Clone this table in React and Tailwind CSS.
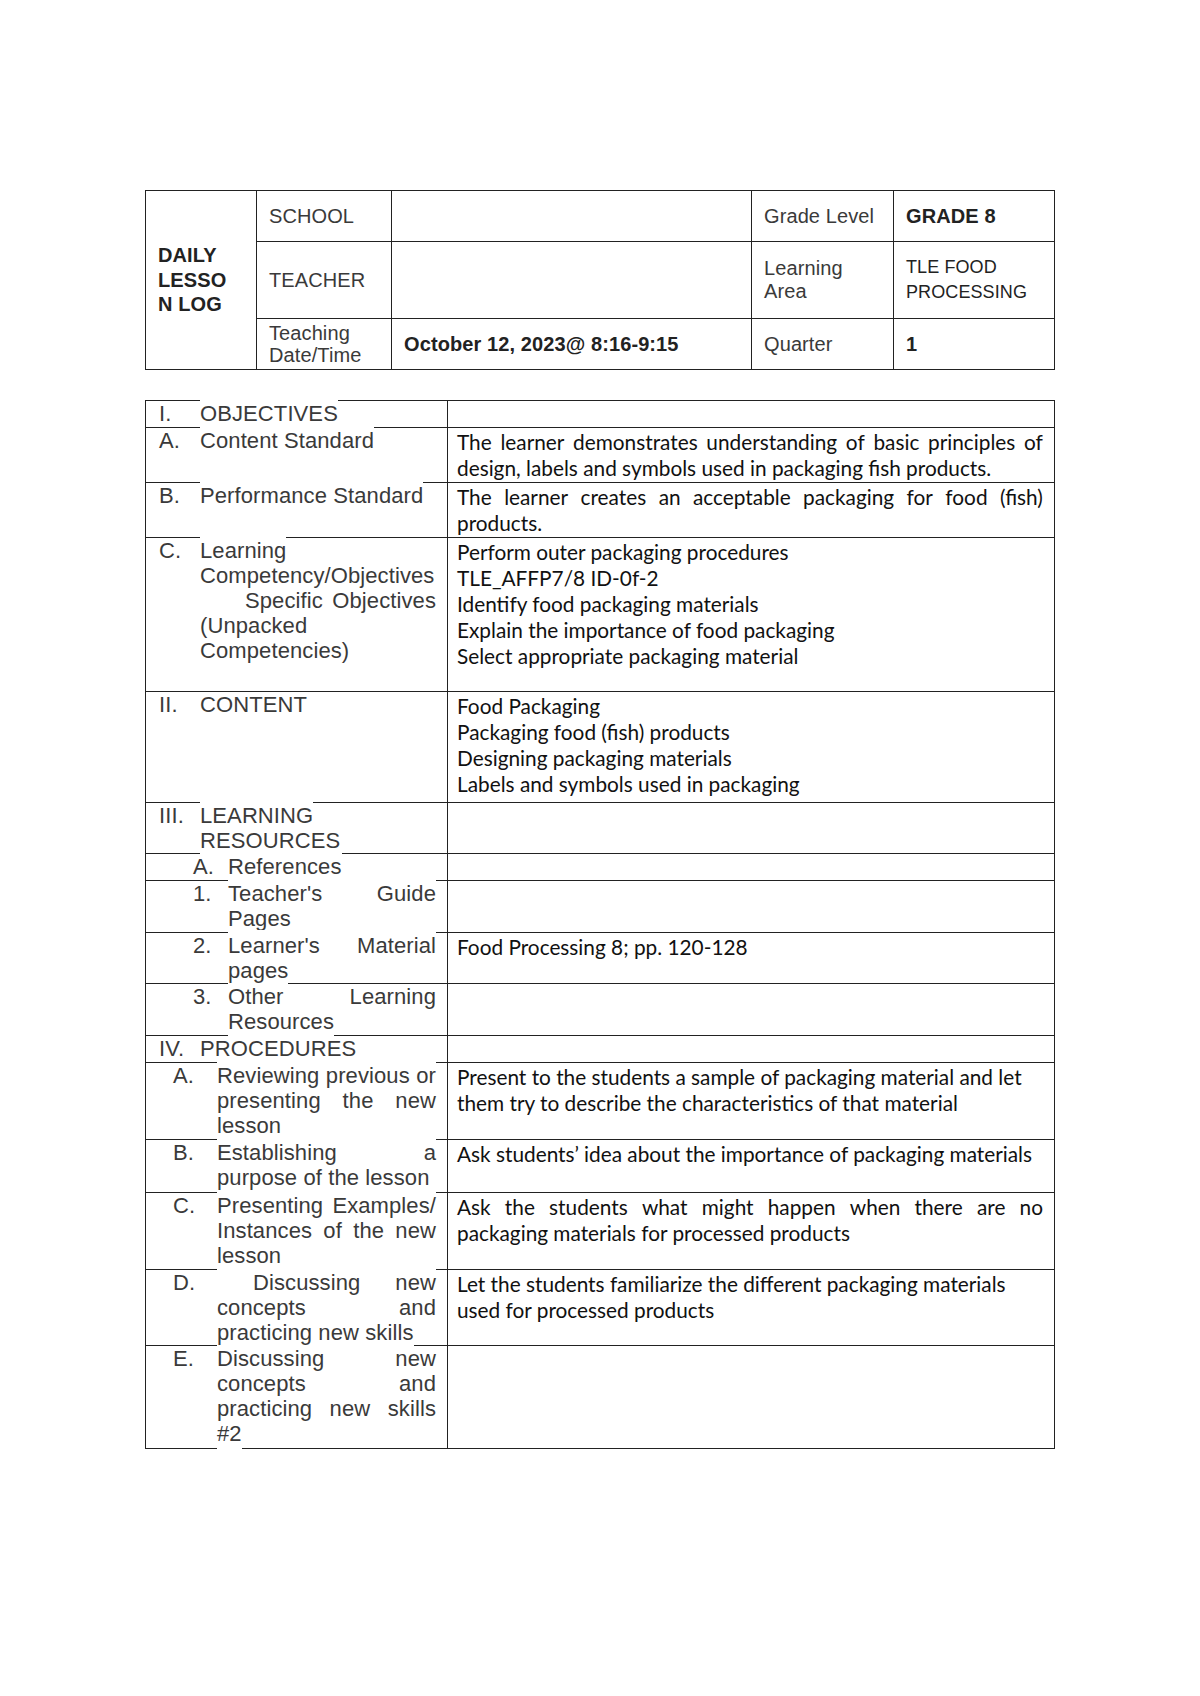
const arial = "font-['Liberation_Sans',Arial,sans-serif]";
const cal = "font-['Lato',sans-serif]";

const indent = {
  0: { pad: 'pl-[13px]', num: 'w-[41px]' },
  1: { pad: 'pl-[47px]', num: 'w-[35px]' },
  2: { pad: 'pl-[27px]', num: 'w-[44px]' },
};

// j = justified line, top/bot = label box paints over the row line
const rows = [
  { h: 'h-[27px]', num: 'I.', lvl: 0, left: [{ t: 'OBJECTIVES', top: true }], right: [] },
  {
    h: 'h-[55px]', num: 'A.', lvl: 0,
    left: [{ t: 'Content Standard', top: true }],
    right: [
      { t: 'The learner demonstrates understanding of basic principles of', j: true },
      { t: 'design, labels and symbols used in packaging fish products.' },
    ],
  },
  {
    h: 'h-[55px]', num: 'B.', lvl: 0,
    left: [{ t: 'Performance Standard', top: true }],
    right: [
      { t: 'The learner creates an acceptable packaging for food (fish)', j: true },
      { t: 'products.' },
    ],
  },
  {
    h: 'h-[154px]', num: 'C.', lvl: 0,
    left: [
      { t: 'Learning', top: true },
      { t: 'Competency/Objectives' },
      { t: 'Specific Objectives', j: true, ind: true },
      { t: '(Unpacked' },
      { t: 'Competencies)' },
    ],
    right: [
      { t: 'Perform outer packaging procedures' },
      { t: 'TLE_AFFP7/8 ID-0f-2' },
      { t: 'Identify food packaging materials' },
      { t: 'Explain the importance of food packaging' },
      { t: 'Select appropriate packaging material' },
    ],
  },
  {
    h: 'h-[111px]', num: 'II.', lvl: 0,
    left: [{ t: 'CONTENT' }],
    right: [
      { t: 'Food Packaging' },
      { t: 'Packaging food (fish) products' },
      { t: 'Designing packaging materials' },
      { t: 'Labels and symbols used in packaging' },
    ],
  },
  {
    h: 'h-[51px]', num: 'III.', lvl: 0,
    left: [{ t: 'LEARNING', top: true }, { t: 'RESOURCES', bot: true }],
    right: [],
  },
  { h: 'h-[27px]', num: 'A.', lvl: 1, left: [{ t: 'References', top: true, bot: true }], right: [] },
  {
    h: 'h-[52px]', num: '1.', lvl: 1,
    left: [{ t: "Teacher's Guide", j: true, top: true }, { t: 'Pages', bot: true }],
    right: [],
  },
  {
    h: 'h-[51px]', num: '2.', lvl: 1,
    left: [{ t: "Learner's Material", j: true, top: true }, { t: 'pages', bot: true }],
    right: [{ t: 'Food Processing 8; pp. 120-128' }],
  },
  {
    h: 'h-[52px]', num: '3.', lvl: 1,
    left: [{ t: 'Other Learning', j: true }, { t: 'Resources', bot: true }],
    right: [],
  },
  { h: 'h-[27px]', num: 'IV.', lvl: 0, left: [{ t: 'PROCEDURES' }], right: [] },
  {
    h: 'h-[77px]', num: 'A.', lvl: 2,
    left: [
      { t: 'Reviewing previous or', j: true, top: true },
      { t: 'presenting the new', j: true },
      { t: 'lesson', bot: true },
    ],
    right: [
      { t: 'Present to the students a sample of packaging material and let' },
      { t: 'them try to describe the characteristics of that material' },
    ],
  },
  {
    h: 'h-[53px]', num: 'B.', lvl: 2,
    left: [{ t: 'Establishing a', j: true, top: true }, { t: 'purpose of the lesson', bot: true }],
    right: [{ t: 'Ask students’ idea about the importance of packaging materials' }],
  },
  {
    h: 'h-[77px]', num: 'C.', lvl: 2,
    left: [
      { t: 'Presenting Examples/', j: true, top: true },
      { t: 'Instances of the new', j: true },
      { t: 'lesson', bot: true },
    ],
    right: [
      { t: 'Ask the students what might happen when there are no', j: true },
      { t: 'packaging materials for processed products' },
    ],
  },
  {
    h: 'h-[76px]', num: 'D.', lvl: 2,
    left: [
      { t: 'Discussing new', j: true, top: true, ind2: true },
      { t: 'concepts and', j: true },
      { t: 'practicing new skills', bot: true },
    ],
    right: [
      { t: 'Let the students familiarize the different packaging materials' },
      { t: 'used for processed products' },
    ],
  },
  {
    h: 'h-[103px]', num: 'E.', lvl: 2,
    left: [
      { t: 'Discussing new', j: true },
      { t: 'concepts and', j: true },
      { t: 'practicing new skills', j: true },
      { t: '#2', bot: true },
    ],
    right: [],
  },
];

function Words({ t }) {
  return t.split(' ').map((w, i) => <span key={i}>{w}</span>);
}

function LabelLine({ line }) {
  const cls = [
    'relative bg-white whitespace-nowrap h-[25px]',
    line.j ? 'flex justify-between w-full' : 'w-fit',
    line.ind ? 'pl-[45px]' : '',
    line.ind2 ? 'pl-[36px]' : '',
    line.top ? '-mt-[3px] pt-[3px] h-[28px]' : '',
    line.bot ? '-mb-[3px] pb-[3px] h-[28px]' : '',
  ].join(' ');
  return <div className={cls}>{line.j ? <Words t={line.t} /> : line.t}</div>;
}

function TextLine({ line }) {
  if (line.j) {
    return (
      <div className="flex justify-between whitespace-nowrap">
        <Words t={line.t} />
      </div>
    );
  }
  return <div className="whitespace-nowrap">{line.t}</div>;
}

function Row({ row }) {
  const ind = indent[row.lvl];
  return (
    <div className={`grid grid-cols-[301px_608px] border-t border-[#222] ${row.h}`}>
      <div className={`flex ${ind.pad} pr-[11px] ${arial} text-[22px] leading-[25px] tracking-[0.1px] text-[#3a3a3a]`}>
        <div className={`${ind.num} shrink-0`}>{row.num}</div>
        <div className="flex-1 flex flex-col">
          {row.left.map((l, i) => (
            <LabelLine key={i} line={l} />
          ))}
        </div>
      </div>
      <div className={`border-l border-[#222] pl-[9px] pr-[12px] pt-[1px] ${cal} text-[20.8px] leading-[26px] text-[#111]`}>
        {row.right.map((l, i) => (
          <TextLine key={i} line={l} />
        ))}
      </div>
    </div>
  );
}

export default function App() {
  const cell = 'border-l border-t border-[#222] flex items-center px-3';
  return (
    <div className={`min-h-[1696px] w-[1200px] bg-white pt-[190px] pl-[145px] ${arial} text-[#3a3a3a]`}>
      {/* header block */}
      <div className="grid w-[910px] grid-cols-[111px_135px_360px_142px_162px] grid-rows-[51px_77px_51px] border-r border-b border-[#222] text-[20px] tracking-[0.1px]">
        <div className={`${cell} row-span-3 font-bold leading-[24.5px] text-[#222]`}>
          <div>
            DAILY
            <br />
            LESSO
            <br />N LOG
          </div>
        </div>
        <div className={cell}>SCHOOL</div>
        <div className={cell}></div>
        <div className={cell}>Grade Level</div>
        <div className={`${cell} font-bold text-[#222]`}>GRADE 8</div>

        <div className={cell}>TEACHER</div>
        <div className={cell}></div>
        <div className={`${cell} leading-[23px]`}>
          <div>
            Learning
            <br />
            Area
          </div>
        </div>
        <div className={`${cell} text-[18px] leading-[25px] text-[#222]`}>
          <div>
            TLE FOOD
            <br />
            PROCESSING
          </div>
        </div>

        <div className={`${cell} leading-[22.5px]`}>
          <div>
            Teaching
            <br />
            Date/Time
          </div>
        </div>
        <div className={`${cell} font-bold text-[#222]`}>October 12, 2023@ 8:16-9:15</div>
        <div className={cell}>Quarter</div>
        <div className={`${cell} font-bold text-[#222]`}>1</div>
      </div>

      {/* lesson table */}
      <div className="mt-[30px] w-[910px] border-l border-r border-b border-[#222]">
        {rows.map((r, i) => (
          <Row key={i} row={r} />
        ))}
      </div>
    </div>
  );
}
